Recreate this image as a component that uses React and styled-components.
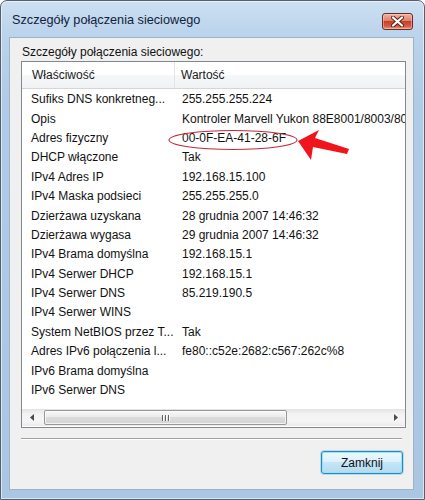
import React from "react";
import styled, { createGlobalStyle } from "styled-components";

const Global = createGlobalStyle`
  html, body { margin: 0; padding: 0; background: #fff; }
  body { font-family: "Liberation Sans", Arial, sans-serif; font-size: 12px; color: #000; }
  * { box-sizing: border-box; }
`;

const Window = styled.div`
  position: relative;
  width: 425px;
  height: 500px;
  display: flex;
  flex-direction: column;
  border: 1px solid #55606c;
  border-radius: 7px 7px 0 0;
  background: linear-gradient(to bottom, #cde0f2 0px, #bcd4ec 30px, #b0cbe7 100px, #aac6e3 100%);
  box-shadow: inset 0 0 0 1px rgba(255, 255, 255, 0.55);
  overflow: hidden;
`;

const TitleBar = styled.div`
  height: 36px;
  flex: none;
  display: flex;
  align-items: center;
  justify-content: space-between;
  padding: 0 11px 0 11px;
`;

const Title = styled.span`
  font-size: 12.7px;
  color: #10223a;
  padding-top: 2px;
`;

const CloseButton = styled.div`
  width: 31px;
  height: 17px;
  margin-top: 4px;
  border: 1px solid #6b2a1e;
  border-radius: 3px;
  background: linear-gradient(to bottom, #efb3a4 0%, #de806a 45%, #c9402a 50%, #d25a40 80%, #e59a84 100%);
  box-shadow: inset 0 0 0 1px rgba(255, 220, 210, 0.45);
  display: flex;
  align-items: center;
  justify-content: center;
`;

const Client = styled.div`
  flex: 1;
  margin: 0 10px 9px 8px;
  background: #f0f0f0;
  border: 1px solid #9fb3c8;
  display: flex;
  flex-direction: column;
  padding: 0 8px 0 11px;
`;

const Caption = styled.div`
  margin-top: 7px;
  padding-left: 1px;
  line-height: 15px;
  font-size: 12px;
  color: #111;
`;

const ListBox = styled.div`
  margin-top: 1px;
  width: 385px;
  height: 367px;
  border: 1px solid #828790;
  background: #fff;
  display: flex;
  flex-direction: column;
  overflow: hidden;
`;

const HeaderRow = styled.div`
  height: 27px;
  flex: none;
  display: flex;
  background: linear-gradient(to bottom, #ffffff 0%, #ffffff 50%, #f6f7f9 51%, #f1f2f4 100%);
  border-bottom: 1px solid #d5d5d5;
`;

const HeaderCell = styled.div`
  width: ${(p) => p.$w || "auto"};
  flex: ${(p) => (p.$w ? "none" : "1")};
  display: flex;
  align-items: center;
  padding-left: ${(p) => p.$pad}px;
  padding-bottom: 1px;
  border-right: ${(p) => (p.$divider ? "1px solid #e3e4e6" : "none")};
  color: #1a1a1a;
  white-space: nowrap;
`;

const Rows = styled.div`
  flex: 1;
  display: flex;
  flex-direction: column;
  padding-top: 0.5px;
`;

const Row = styled.div`
  height: 19.4px;
  flex: none;
  display: flex;
  align-items: center;
  white-space: nowrap;
`;

const Cell = styled.div`
  width: ${(p) => p.$w || "auto"};
  flex: ${(p) => (p.$w ? "none" : "1")};
  padding-left: ${(p) => p.$pad}px;
  overflow: hidden;
  color: #111;
`;

const HScroll = styled.div`
  height: 17px;
  flex: none;
  display: flex;
  align-items: stretch;
  background: linear-gradient(to bottom, #e3e3e3 0%, #f3f3f3 30%, #f5f5f5 70%, #ececec 100%);
  margin-bottom: 1px;
`;

const ArrowBtn = styled.div`
  width: 19px;
  flex: none;
  display: flex;
  align-items: center;
  justify-content: center;
`;

const Track = styled.div`
  flex: 1;
  display: flex;
  align-items: stretch;
  padding: 1px 0;
`;

const Thumb = styled.div`
  width: 243px;
  margin-left: 3px;
  border: 1px solid #979797;
  border-radius: 2px;
  background: linear-gradient(to bottom, #f8f8f8 0%, #ececec 45%, #dcdcdc 50%, #d4d4d4 100%);
  box-shadow: inset 0 0 0 1px rgba(255, 255, 255, 0.7);
  display: flex;
  align-items: center;
  justify-content: center;
  gap: 2px;
`;

const Grip = styled.span`
  width: 1px;
  height: 6px;
  background: #606060;
  box-shadow: 1px 0 0 #fff;
`;

const Separator = styled.div`
  margin-top: 10px;
  width: 381px;
  height: 2px;
  border-top: 1px solid #a0a0a0;
  border-bottom: 1px solid #ffffff;
`;

const ButtonRow = styled.div`
  display: flex;
  justify-content: flex-end;
  padding-right: 2px;
  margin-top: 11px;
`;

const Button = styled.div`
  width: 82px;
  height: 23px;
  border: 1px solid #3c7fb1;
  border-radius: 3px;
  background: linear-gradient(to bottom, #eef8fe 0%, #dcf1fc 45%, #c4e6f8 50%, #b3dbf1 100%);
  box-shadow: 0 0 0 1px rgba(72, 200, 240, 0.4), inset 0 0 0 1px rgba(140, 230, 255, 0.95);
  display: flex;
  align-items: center;
  justify-content: center;
  font-size: 12px;
  color: #111;
`;

const Annotation = styled.svg`
  position: absolute;
  left: 0;
  top: 0;
  pointer-events: none;
`;

const rows = [
  ["Sufiks DNS konkretneg...", "255.255.255.224"],
  ["Opis", "Kontroler Marvell Yukon 88E8001/8003/8053"],
  ["Adres fizyczny", "00-0F-EA-41-28-6F"],
  ["DHCP włączone", "Tak"],
  ["IPv4 Adres IP", "192.168.15.100"],
  ["IPv4 Maska podsieci", "255.255.255.0"],
  ["Dzierżawa uzyskana", "28 grudnia 2007 14:46:32"],
  ["Dzierżawa wygasa", "29 grudnia 2007 14:46:32"],
  ["IPv4 Brama domyślna", "192.168.15.1"],
  ["IPv4 Serwer DHCP", "192.168.15.1"],
  ["IPv4 Serwer DNS", "85.219.190.5"],
  ["IPv4 Serwer WINS", ""],
  ["System NetBIOS przez T...", "Tak"],
  ["Adres IPv6 połączenia l...", "fe80::c52e:2682:c567:262c%8"],
  ["IPv6 Brama domyślna", ""],
  ["IPv6 Serwer DNS", ""],
];

export default function App() {
  return (
    <>
      <Global />
      <Window>
        <TitleBar>
          <Title>Szczegóły połączenia sieciowego</Title>
          <CloseButton>
            <svg width="13" height="11" viewBox="0 0 13 11">
              <path d="M2 1.5 L11 9.5 M11 1.5 L2 9.5" stroke="#5a2015" strokeWidth="4" strokeLinecap="round" />
              <path d="M2 1.5 L11 9.5 M11 1.5 L2 9.5" stroke="#ffffff" strokeWidth="2.2" strokeLinecap="round" />
            </svg>
          </CloseButton>
        </TitleBar>
        <Client>
          <Caption>Szczegóły połączenia sieciowego:</Caption>
          <ListBox>
            <HeaderRow>
              <HeaderCell $w="153px" $pad={10} $divider>Właściwość</HeaderCell>
              <HeaderCell $pad={6}>Wartość</HeaderCell>
            </HeaderRow>
            <Rows>
              {rows.map(([k, v]) => (
                <Row key={k}>
                  <Cell $w="153px" $pad={9}>{k}</Cell>
                  <Cell $pad={7}>{v}</Cell>
                </Row>
              ))}
            </Rows>
            <HScroll>
              <ArrowBtn>
                <svg width="4" height="7" viewBox="0 0 4 7"><path d="M4 0 L0 3.5 L4 7 Z" fill="#4a4a4a" /></svg>
              </ArrowBtn>
              <Track>
                <Thumb>
                  <Grip /><Grip /><Grip />
                </Thumb>
              </Track>
              <ArrowBtn>
                <svg width="4" height="7" viewBox="0 0 4 7"><path d="M0 0 L4 3.5 L0 7 Z" fill="#4a4a4a" /></svg>
              </ArrowBtn>
            </HScroll>
          </ListBox>
          <Separator />
          <ButtonRow>
            <Button>Zamknij</Button>
          </ButtonRow>
        </Client>
        <Annotation width="425" height="500" viewBox="0 0 425 500">
          <ellipse cx="232" cy="139" rx="64" ry="9.5" fill="none" stroke="#c4283a" strokeWidth="1.1" />
          <path d="M297 140 L318 129 L314 137 L348 148 L346 153 L312 146 L310 159 Z" fill="#f0141c" />
        </Annotation>
      </Window>
    </>
  );
}
